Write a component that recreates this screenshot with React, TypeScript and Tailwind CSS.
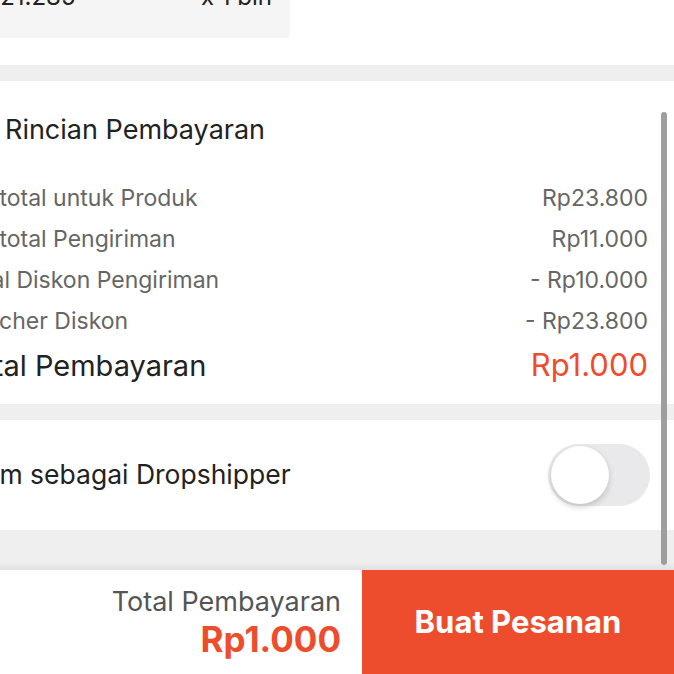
import React from "react";

const rows = [
  { label: "Subtotal untuk Produk", value: "Rp23.800" },
  { label: "Subtotal Pengiriman", value: "Rp11.000" },
  { label: "Total Diskon Pengiriman", value: "- Rp10.000" },
  { label: "Voucher Diskon", value: "- Rp23.800" },
];

export default function App() {
  return (
    <div
      className="relative w-[674px] h-[674px] overflow-hidden bg-[#efefef] flex flex-col"
      style={{ fontFamily: "Inter, 'Noto Sans', sans-serif" }}
    >
      <div className="relative flex-1 overflow-hidden">
        <div className="flex flex-col">
          {/* top item */}
          <div className="bg-white h-[65px]">
            <div className="w-[310px] h-[38px] bg-[#f5f5f5] rounded-br-[4px] flex items-end justify-between pr-[18px] -ml-[20px] overflow-hidden">
              <span className="text-[24px] leading-[24px] text-[#222] mb-[29px] ml-[-10px]">Rp21.285</span>
              <span className="text-[24px] leading-[24px] text-[#222] mb-[29px]">x 1 bin</span>
            </div>
          </div>
          <div className="h-[16px]" />
          {/* Rincian */}
          <div className="bg-white h-[323px] flex flex-col">
            <div className="pl-[5px] pt-[33px] text-[27px] leading-[32px] text-[#222]">Rincian Pembayaran</div>
            <div className="flex flex-col pr-[26px] mt-[32px]">
              {rows.map((r) => (
                <div key={r.label} className="flex justify-between items-center h-[41px] text-[23px] text-[#666] -ml-[43px]">
                  <span>{r.label}</span>
                  <span>{r.value}</span>
                </div>
              ))}
              <div className="flex justify-between items-center h-[47px] text-[29px] text-[#222] -ml-[40px]">
                <span>Total Pembayaran</span>
                <span className="text-[#ee4d2d] text-[31px]">Rp1.000</span>
              </div>
            </div>
          </div>
          <div className="h-[16px]" />
          {/* Dropshipper */}
          <div className="bg-white h-[110px] flex items-center justify-between pr-[24px] -ml-[42px]">
            <span className="text-[26.5px] text-[#222]">Kirim sebagai Dropshipper</span>
            <div className="relative w-[102px] h-[62px] rounded-full bg-[#e9e9eb]">
              <div className="absolute left-[3px] top-[2px] w-[58px] h-[58px] rounded-full bg-white shadow-[0_3px_6px_rgba(0,0,0,0.18)]" />
            </div>
          </div>
        </div>
        {/* bottom shadow */}
        <div className="absolute left-0 right-0 bottom-0 h-[8px] bg-gradient-to-b from-transparent to-[rgba(0,0,0,0.06)]" />
        {/* scrollbar */}
        <div className="absolute left-[661px] top-[112px] w-[6px] h-[453px] rounded-full bg-[#9e9e9e]" />
      </div>
      {/* bottom bar */}
      <div className="h-[104px] flex bg-white">
        <div className="flex-1 flex flex-col items-end justify-center pr-[21px]">
          <span className="text-[27px] leading-[34px] text-[#555]">Total Pembayaran</span>
          <span className="text-[35px] leading-[40px] font-bold text-[#ee4d2d]">Rp1.000</span>
        </div>
        <div className="w-[312px] bg-[#ee4d2d] flex items-center justify-center">
          <span className="text-[31px] font-bold text-white">Buat Pesanan</span>
        </div>
      </div>
    </div>
  );
}
